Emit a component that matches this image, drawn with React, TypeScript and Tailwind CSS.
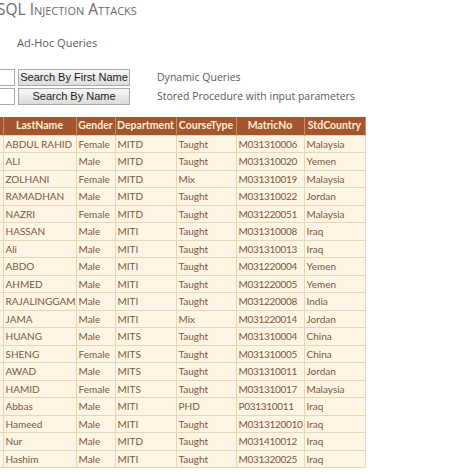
const rows: string[][] = [
  ["ABDUL RAHID", "Female", "MITD", "Taught", "M031310006", "Malaysia"],
  ["ALI", "Male", "MITD", "Taught", "M031310020", "Yemen"],
  ["ZOLHANI", "Female", "MITD", "Mix", "M031310019", "Malaysia"],
  ["RAMADHAN", "Male", "MITD", "Taught", "M031310022", "Jordan"],
  ["NAZRI", "Female", "MITD", "Taught", "M031220051", "Malaysia"],
  ["HASSAN", "Male", "MITI", "Taught", "M031310008", "Iraq"],
  ["Ali", "Male", "MITI", "Taught", "M031310013", "Iraq"],
  ["ABDO", "Male", "MITI", "Taught", "M031220004", "Yemen"],
  ["AHMED", "Male", "MITI", "Taught", "M031220005", "Yemen"],
  ["RAJALINGGAM", "Male", "MITI", "Taught", "M031220008", "India"],
  ["JAMA", "Male", "MITI", "Mix", "M031220014", "Jordan"],
  ["HUANG", "Male", "MITS", "Taught", "M031310004", "China"],
  ["SHENG", "Female", "MITS", "Taught", "M031310005", "China"],
  ["AWAD", "Male", "MITS", "Taught", "M031310011", "Jordan"],
  ["HAMID", "Female", "MITS", "Taught", "M031310017", "Malaysia"],
  ["Abbas", "Male", "MITI", "PHD", "P031310011", "Iraq"],
  ["Hameed", "Male", "MITI", "Taught", "M0313120010", "Iraq"],
  ["Nur", "Male", "MITD", "Taught", "M031410012", "Iraq"],
  ["Hashim", "Male", "MITI", "Taught", "M031320025", "Iraq"],
];

const headers = ["LastName", "Gender", "Department", "CourseType", "MatricNo", "StdCountry"];
const widths = ["w-[73px]", "w-[39px]", "w-[61px]", "w-[60px]", "w-[68px]", "w-[61px]"];

const btn =
  "h-[17px] w-[112px] border border-[#a9a9a9] bg-gradient-to-b from-[#f6f6f6] to-[#dcdcdc] text-[11px] leading-none text-[#222] whitespace-nowrap font-['Liberation_Sans',Arial,sans-serif]";

export default function App() {
  return (
    <div className="w-[474px] h-[474px] overflow-hidden bg-white font-['Open_Sans',sans-serif]">
      {/* Title */}
      <h1 className="pt-[1px] -ml-[3px] h-[20px] text-[15.5px] leading-[16px] text-[#6a6a6a] [font-variant:small-caps]">
        SQL Injection Attacks
      </h1>

      <p className="mt-[16px] ml-[17px] text-[11px] leading-[14px] text-[#5a5a5a]">Ad-Hoc Queries</p>

      {/* Search rows */}
      <div className="mt-[19px] flex flex-col gap-[2px]">
        <div className="flex items-center">
          <div className="h-[17px] w-[15px] border border-[#a9a9a9] border-l-0 bg-white" />
          <button className={`ml-[3px] ${btn}`}>Search By First Name</button>
          <span className="ml-[27px] text-[10.5px] text-[#5a5a5a]">Dynamic Queries</span>
        </div>
        <div className="flex items-center">
          <div className="h-[17px] w-[15px] border border-[#a9a9a9] border-l-0 bg-white" />
          <button className={`ml-[3px] ${btn}`}>Search By Name</button>
          <span className="ml-[27px] text-[10.5px] text-[#5a5a5a]">Stored Procedure with input parameters</span>
        </div>
      </div>

      {/* Table */}
      <table className="mt-[12px] w-[365px] table-fixed border-collapse text-[10px] font-['Lato',sans-serif]">
        <colgroup>
          <col className="w-[3px]" />
          {widths.map((w, i) => (
            <col key={i} className={w} />
          ))}
        </colgroup>
        <thead>
          <tr className="h-[18px] bg-[#a3552e]">
            <th className="p-0 border-r border-[#c98b62]" />
            {headers.map((h) => (
              <th
                key={h}
                className="p-0 text-center text-[10.5px] font-bold text-[#fdeed6] border-x border-[#c98b62] whitespace-nowrap overflow-hidden"
              >
                {h}
              </th>
            ))}
          </tr>
        </thead>
        <tbody>
          {rows.map((r, ri) => (
            <tr key={ri} className="h-[17.5px] bg-[#fdf4e3]">
              <td className="p-0 border border-l-0 border-[#e6d6b8]" />
              {r.map((c, ci) => (
                <td
                  key={ci}
                  className={`px-[2px] py-0 leading-[16px] text-[#7a5842] border border-[#e6d6b8] whitespace-nowrap overflow-hidden ${
                    ci === 4 ? "tracking-[-0.3px]" : ""
                  }`}
                >
                  {c}
                </td>
              ))}
            </tr>
          ))}
        </tbody>
      </table>
    </div>
  );
}
